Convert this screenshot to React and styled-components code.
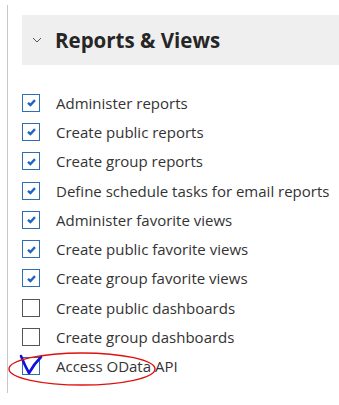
import React from "react";
import styled, { createGlobalStyle } from "styled-components";

const Global = createGlobalStyle`
  html, body { margin: 0; padding: 0; background: #ffffff; }
  body { width: 339px; height: 405px; overflow: hidden; }
`;

const Page = styled.div`
  position: relative;
  width: 339px;
  height: 405px;
  padding: 5px 0 0 7px;
  box-sizing: border-box;
`;

const Panel = styled.div`
  border-left: 1px solid #c8c8c8;
  height: 388px;
  padding: 10px 0 0 14px;
  box-sizing: border-box;
`;

const Header = styled.div`
  display: flex;
  align-items: center;
  height: 50px;
  background: #efefef;
  padding-left: 10px;
  gap: 13px;
`;

const Title = styled.h2`
  margin: 0;
  font-family: "Open Sans", "Noto Sans", sans-serif;
  font-weight: 700;
  font-size: 20.5px;
  color: #262626;
  letter-spacing: 0;
`;

const List = styled.ul`
  list-style: none;
  margin: 23px 0 0 0;
  padding: 0;
  display: flex;
  flex-direction: column;
`;

const Row = styled.li`
  display: flex;
  align-items: center;
  height: 29.3px;
  gap: 16px;
  font-family: "Open Sans", "Noto Sans", sans-serif;
  font-size: 15px;
  color: #333333;
`;

const Box = styled.span`
  position: relative;
  box-sizing: border-box;
  width: 18px;
  height: 18px;
  flex: none;
  border: 1.5px solid ${(p) => (p.$checked ? "#2f6db5" : "#555555")};
  display: flex;
  align-items: center;
  justify-content: center;
  background: #fff;
`;

const Annot = styled.svg`
  position: absolute;
  left: 0;
  top: 0;
  pointer-events: none;
`;

const items = [
  ["Administer reports", true],
  ["Create public reports", true],
  ["Create group reports", true],
  ["Define schedule tasks for email reports", true],
  ["Administer favorite views", true],
  ["Create public favorite views", true],
  ["Create group favorite views", true],
  ["Create public dashboards", false],
  ["Create group dashboards", false],
  ["Access OData API", "hand"],
];

const Check = () => (
  <svg width="11" height="9" viewBox="0 0 11 9">
    <path d="M2 4.8 L4.4 7 L9 2.2" fill="none" stroke="#1f66c4" strokeWidth="2.4" />
  </svg>
);

export default function App() {
  return (
    <>
      <Global />
      <Page>
        <Panel>
          <Header>
            <svg width="10" height="6" viewBox="0 0 10 6">
              <path d="M1 1 L5 5 L9 1" fill="none" stroke="#555" strokeWidth="1" />
            </svg>
            <Title>Reports &amp; Views</Title>
          </Header>
          <List>
            {items.map(([label, state]) => (
              <Row key={label}>
                <Box $checked={state === true || state === "hand"}>
                  {state === true && <Check />}
                </Box>
                <span>{label}</span>
              </Row>
            ))}
          </List>
        </Panel>
        <Annot width="339" height="405" viewBox="0 0 339 405">
          <path d="M21 356 Q25 366 29 373 Q34 364 41 357" fill="none" stroke="#1010e0" strokeWidth="2.6" strokeLinecap="round" strokeLinejoin="round" />
          <ellipse cx="82" cy="369" rx="73" ry="16" fill="none" stroke="#e01010" strokeWidth="1.4" />
        </Annot>
      </Page>
    </>
  );
}
